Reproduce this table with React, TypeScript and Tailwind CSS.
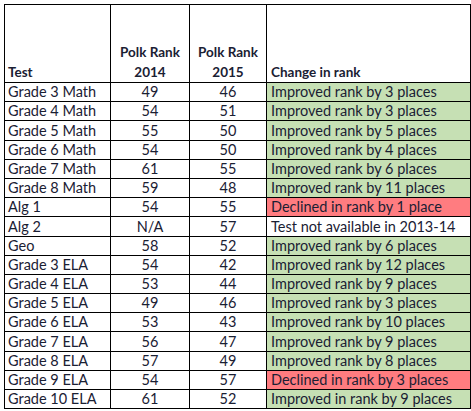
import React from 'react';

type Row = { test: string; r2014: string; r2015: string; change: string; tone: 'up' | 'down' | 'none' };

const ROWS: Row[] = [
  { test: 'Grade 3 Math', r2014: '49', r2015: '46', change: 'Improved rank by 3 places', tone: 'up' },
  { test: 'Grade 4 Math', r2014: '54', r2015: '51', change: 'Improved rank by 3 places', tone: 'up' },
  { test: 'Grade 5 Math', r2014: '55', r2015: '50', change: 'Improved rank by 5 places', tone: 'up' },
  { test: 'Grade 6 Math', r2014: '54', r2015: '50', change: 'Improved rank by 4 places', tone: 'up' },
  { test: 'Grade 7 Math', r2014: '61', r2015: '55', change: 'Improved rank by 6 places', tone: 'up' },
  { test: 'Grade 8 Math', r2014: '59', r2015: '48', change: 'Improved rank by 11 places', tone: 'up' },
  { test: 'Alg 1', r2014: '54', r2015: '55', change: 'Declined in rank by 1 place', tone: 'down' },
  { test: 'Alg 2', r2014: 'N/A', r2015: '57', change: 'Test not available in 2013-14', tone: 'none' },
  { test: 'Geo', r2014: '58', r2015: '52', change: 'Improved rank by 6 places', tone: 'up' },
  { test: 'Grade 3 ELA', r2014: '54', r2015: '42', change: 'Improved rank by 12 places', tone: 'up' },
  { test: 'Grade 4 ELA', r2014: '53', r2015: '44', change: 'Improved rank by 9 places', tone: 'up' },
  { test: 'Grade 5 ELA', r2014: '49', r2015: '46', change: 'Improved rank by 3 places', tone: 'up' },
  { test: 'Grade 6 ELA', r2014: '53', r2015: '43', change: 'Improved rank by 10 places', tone: 'up' },
  { test: 'Grade 7 ELA', r2014: '56', r2015: '47', change: 'Improved rank by 9 places', tone: 'up' },
  { test: 'Grade 8 ELA', r2014: '57', r2015: '49', change: 'Improved rank by 8 places', tone: 'up' },
  { test: 'Grade 9 ELA', r2014: '54', r2015: '57', change: 'Declined in rank by 3 places', tone: 'down' },
  { test: 'Grade 10 ELA', r2014: '61', r2015: '52', change: 'Improved in rank by 9 places', tone: 'up' },
];

const toneClass = {
  up: 'bg-[#c6e0b4]',
  down: 'bg-[#ff7c80]',
  none: 'bg-white',
};

const App: React.FC = () => {
  return (
    <div className="min-h-screen bg-white pl-[4px] pt-[4px] font-['Lato',sans-serif] text-[14.5px] text-[#1a2033]">
      <table className="w-[466px] table-fixed border-collapse border border-black">
        <colgroup>
          <col className="w-[106px]" />
          <col className="w-[79px]" />
          <col className="w-[77px]" />
          <col className="w-[204px]" />
        </colgroup>
        <thead>
          {/* header cells sit at the bottom, like the spreadsheet */}
          <tr className="h-[78px] align-bottom text-[13.5px] font-bold leading-[20px]">
            <th className="border border-black px-[3px] text-left">Test</th>
            <th className="border border-black text-center">
              Polk Rank
              <br />
              2014
            </th>
            <th className="border border-black text-center">
              Polk Rank
              <br />
              2015
            </th>
            <th className="border border-black px-[4px] text-left">Change in rank</th>
          </tr>
        </thead>
        <tbody>
          {ROWS.map((row) => (
            <tr key={row.test} className="h-[19.2px] leading-[18px]">
              <td className="border border-black px-[3px] align-bottom">{row.test}</td>
              <td className="border border-black text-center align-bottom">{row.r2014}</td>
              <td className="border border-black text-center align-bottom">{row.r2015}</td>
              <td className={`border border-black px-[4px] align-bottom ${toneClass[row.tone]}`}>{row.change}</td>
            </tr>
          ))}
        </tbody>
      </table>
    </div>
  );
};

export default App;
